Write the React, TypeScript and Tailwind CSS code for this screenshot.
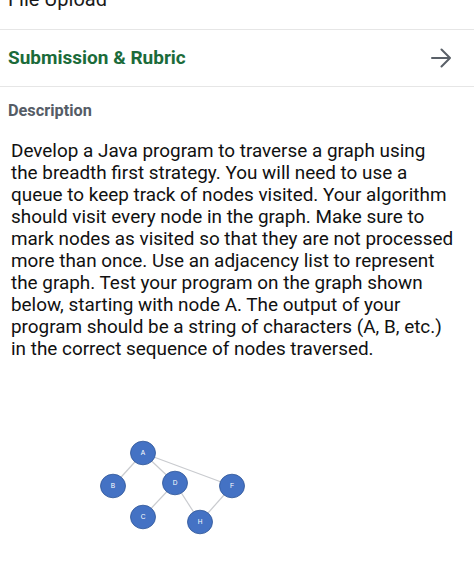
import React from "react";

const nodes: { id: string; x: number; y: number }[] = [
  { id: "A", x: 143, y: 453 },
  { id: "B", x: 113, y: 486 },
  { id: "D", x: 175, y: 483 },
  { id: "F", x: 232, y: 486 },
  { id: "C", x: 143, y: 517 },
  { id: "H", x: 200, y: 522 },
];

const edges: [string, string][] = [
  ["A", "B"],
  ["A", "D"],
  ["A", "F"],
  ["D", "C"],
  ["D", "H"],
  ["F", "H"],
];

const lines = [
  "Develop a Java program to traverse a graph using",
  "the breadth first strategy. You will need to use a",
  "queue to keep track of nodes visited. Your algorithm",
  "should visit every node in the graph. Make sure to",
  "mark nodes as visited so that they are not processed",
  "more than once. Use an adjacency list to represent",
  "the graph. Test your program on the graph shown",
  "below, starting with node A. The output of your",
  "program should be a string of characters (A, B, etc.)",
  "in the correct sequence of nodes traversed.",
];

function Graph() {
  const pos = (id: string) => nodes.find((n) => n.id === id)!;
  const ox = 80;
  const oy = 420;
  return (
    <svg width="200" height="130" viewBox="0 0 200 130" className="block">
      {edges.map(([a, b]) => {
        const p = pos(a);
        const q = pos(b);
        return (
          <line
            key={a + b}
            x1={p.x - ox}
            y1={p.y - oy}
            x2={q.x - ox}
            y2={q.y - oy}
            stroke="#c9cbcf"
            strokeWidth="1.2"
          />
        );
      })}
      {nodes.map((n) => (
        <g key={n.id}>
          <ellipse
            cx={n.x - ox}
            cy={n.y - oy}
            rx="12.5"
            ry="11.8"
            fill="#4472c4"
            stroke="#2f5597"
            strokeWidth="0.8"
          />
          <text
            x={n.x - ox}
            y={n.y - oy + 2.3}
            textAnchor="middle"
            fontSize="6.5"
            fill="#ffffff"
            fontFamily="Liberation Sans, Arial, sans-serif"
          >
            {n.id}
          </text>
        </g>
      ))}
    </svg>
  );
}

export default function App() {
  return (
    <div
      className="w-[474px] h-[585px] overflow-hidden bg-white"
      style={{ fontFamily: "Roboto, 'Noto Sans', sans-serif" }}
    >
      <div className="h-[30px] border-b border-[#e6e6e6] overflow-hidden">
        <div className="mt-[-12px] ml-[8px] text-[20px] leading-[22px] text-[#1a1a1a]">
          File Upload
        </div>
      </div>
      <div className="h-[57px] border-b border-[#e6e6e6] flex items-center justify-between pl-[8px] pr-[23px]">
        <span className="text-[19px] font-bold text-[#1b6b3a]">
          Submission &amp; Rubric
        </span>
        <svg width="20" height="20" viewBox="0 0 20 20" fill="none">
          <path
            d="M1 10H19M10.5 1.5L19 10L10.5 18.5"
            stroke="#5a6068"
            strokeWidth="2"
            strokeLinecap="round"
            strokeLinejoin="round"
          />
        </svg>
      </div>
      <div className="pl-[8px] pt-[14px] text-[16.3px] leading-[20px] font-bold text-[#555c66]">
        Description
      </div>
      <p className="pl-[11px] pt-[19px] text-[18.9px] leading-[22px] text-[#111111]">
        {lines.map((l) => (
          <span key={l} className="block whitespace-nowrap">
            {l}
          </span>
        ))}
      </p>
      <div className="pl-[80px] pt-[60px]">
        <Graph />
      </div>
    </div>
  );
}
